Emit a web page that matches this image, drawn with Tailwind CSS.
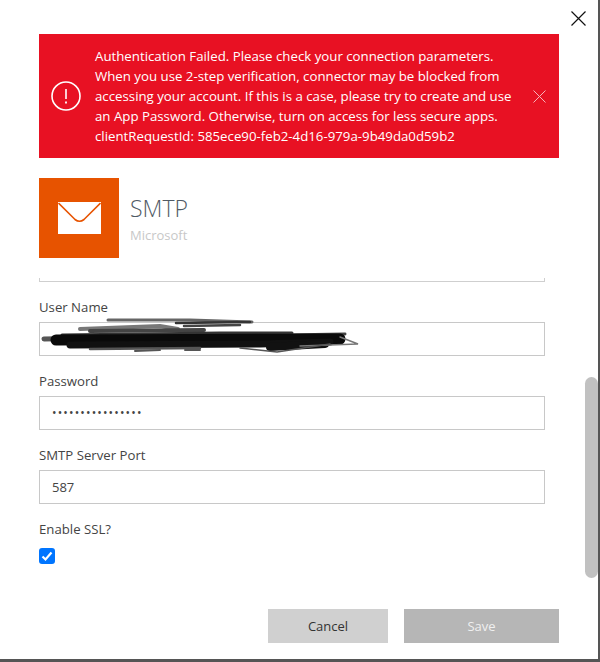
<!DOCTYPE html>
<html lang="en">
<head>
    <meta charset="UTF-8">
    <meta name="viewport" content="width=device-width, initial-scale=1.0">
    <title>SMTP connection</title>
    <script src="https://cdn.jsdelivr.net/npm/@tailwindcss/browser@4"></script>
</head>
<body class="bg-white font-['Open_Sans',sans-serif]">
    <div class="relative w-[600px] h-[662px] overflow-hidden bg-white border-r-2 border-b-[3px] border-r-[#555] border-b-[#555]">
        <!-- close dialog -->
        <svg class="absolute left-[571px] top-[11px] w-[15px] h-[15px]" viewBox="0 0 15 15" fill="none" stroke="#111" stroke-width="1.2"><path d="M0.5 0.5 14.5 14.5M14.5 0.5 0.5 14.5"/></svg>

        <!-- scrollbar -->
        <div class="absolute left-[585px] top-[377px] w-[13px] h-[201px] rounded-t-[7px] rounded-b-[7px] bg-[#c1c1c1]"></div>

        <div class="pt-[34px] pl-[39px] w-[559px]">
            <!-- error -->
            <div class="flex items-center w-[520px] h-[124px] bg-[#e81123] text-white">
                <svg class="ml-[12px] w-[30px] h-[30px] shrink-0" viewBox="0 0 30 30" fill="none" stroke="white"><circle cx="15" cy="15" r="14" stroke-width="1.6"/><path d="M15 8v10" stroke-width="1.6"/><path d="M15 20.5v2" stroke-width="1.8"/></svg>
                <p class="ml-[14px] w-[430px] shrink-0 text-[13.25px] leading-[20px]">Authentication Failed. Please check your connection parameters. When you use 2-step verification, connector may be blocked from accessing your account. If this is a case, please try to create and use an App Password. Otherwise, turn on access for less secure apps. clientRequestId: 585ece90-feb2-4d16-979a-9b49da0d59b2</p>
                <svg class="ml-[8px] w-[13px] h-[13px] shrink-0" viewBox="0 0 13 13" fill="none" stroke="#f7b3b9" stroke-width="1"><path d="M0.5 0.5 12.5 12.5M12.5 0.5 0.5 12.5"/></svg>
            </div>

            <!-- connector header -->
            <div class="flex mt-[20px] h-[80px]">
                <div class="flex items-center justify-center w-[80px] h-[80px] bg-[#e75300]">
                    <svg class="w-[43px] h-[32px]" viewBox="0 0 43 32"><rect width="43" height="32" fill="white"/><path d="M0.5 1 17 17.5Q21.5 21 26 17.5L42.5 1" fill="none" stroke="#e75300" stroke-width="1.6"/></svg>
                </div>
                <div class="ml-[11px] pt-[15px]">
                    <div class="text-[23px] leading-[30px] font-light text-[#505a64]">SMTP</div>
                    <div class="mt-[2px] text-[13px] leading-[20px] text-[#c8c8c8]">Microsoft</div>
                </div>
            </div>

            <!-- field scrolled out of view -->
            <div class="w-[506px] h-[4px] mt-[20px] border border-t-0 border-[#cfcfcf]"></div>

            <!-- form -->
            <div class="w-[506px] text-[#444]">
                <label class="block mt-[15px] text-[13.2px] leading-[20px]">User Name</label>
                <div class="relative h-[34px] mt-[5px] border border-[#c8c8c8]">
                    <svg class="absolute left-0 top-[-8px] w-[330px] h-[45px] overflow-visible" viewBox="40 315 330 45" fill="none" stroke-linecap="round">
                        <path d="M108 320 L190 320 L252 322" stroke="#666" stroke-width="3"/>
                        <path d="M176 323 L250 322" stroke="#333" stroke-width="2.5"/>
                        <path d="M184 326 L240 325" stroke="#444" stroke-width="2.5"/>
                        <path d="M80 329 L160 326 L178 329" stroke="#777" stroke-width="4"/>
                        <path d="M90 331 L204 330" stroke="#444" stroke-width="4"/>
                        <path d="M62 335 L220 333 L292 333" stroke="#333" stroke-width="3"/>
                        <path d="M225 336 L345 334" stroke="#444" stroke-width="3"/>
                        <path d="M44 339 L100 338" stroke="#555" stroke-width="5"/>
                        <path d="M56 340 L340 339" stroke="#0a0a0a" stroke-width="11"/>
                        <path d="M70 345 L260 344 L330 342" stroke="#111" stroke-width="7"/>
                        <path d="M90 349 L200 348" stroke="#555" stroke-width="2.5"/>
                        <path d="M135 351 L160 350 M185 350 L200 350" stroke="#555" stroke-width="2"/>
                        <path d="M270 347 L325 344" stroke="#111" stroke-width="8"/>
                        <path d="M340 337 L358 344 L300 346" stroke="#777" stroke-width="1.5"/>
                        <path d="M240 348 L277 352 L330 344" stroke="#555" stroke-width="1.5"/>
                    </svg>
                </div>
                <label class="block mt-[15px] text-[13.2px] leading-[20px]">Password</label>
                <div class="h-[34px] mt-[5px] px-[12px] border border-[#c8c8c8] text-[12px] leading-[32px] tracking-[1.15px]">••••••••••••••••</div>
                <label class="block mt-[15px] text-[13.2px] leading-[20px]">SMTP Server Port</label>
                <div class="h-[34px] mt-[5px] px-[12px] border border-[#c8c8c8] text-[13px] leading-[32px]">587</div>
                <label class="block mt-[15px] text-[13.2px] leading-[20px]">Enable SSL?</label>
                <div class="flex items-center justify-center w-[16px] h-[16px] mt-[9px] rounded-[3px] bg-[#0075ff]">
                    <svg class="w-[12px] h-[12px]" viewBox="0 0 12 12" fill="none" stroke="white" stroke-width="2.2"><path d="M1.5 6.5 4.5 9.5 10.5 2.5"/></svg>
                </div>
            </div>

            <!-- actions -->
            <div class="flex justify-end gap-[16px] w-[520px] mt-[45px]">
                <div class="flex items-center justify-center w-[120px] h-[34px] pt-[2px] bg-[#d0d0d0] text-[13px] text-[#333]">Cancel</div>
                <div class="flex items-center justify-center w-[155px] h-[34px] pt-[2px] bg-[#b6b6b6] text-[13px] text-[#f0f0f0]">Save</div>
            </div>
        </div>
    </div>
</body>
</html>
